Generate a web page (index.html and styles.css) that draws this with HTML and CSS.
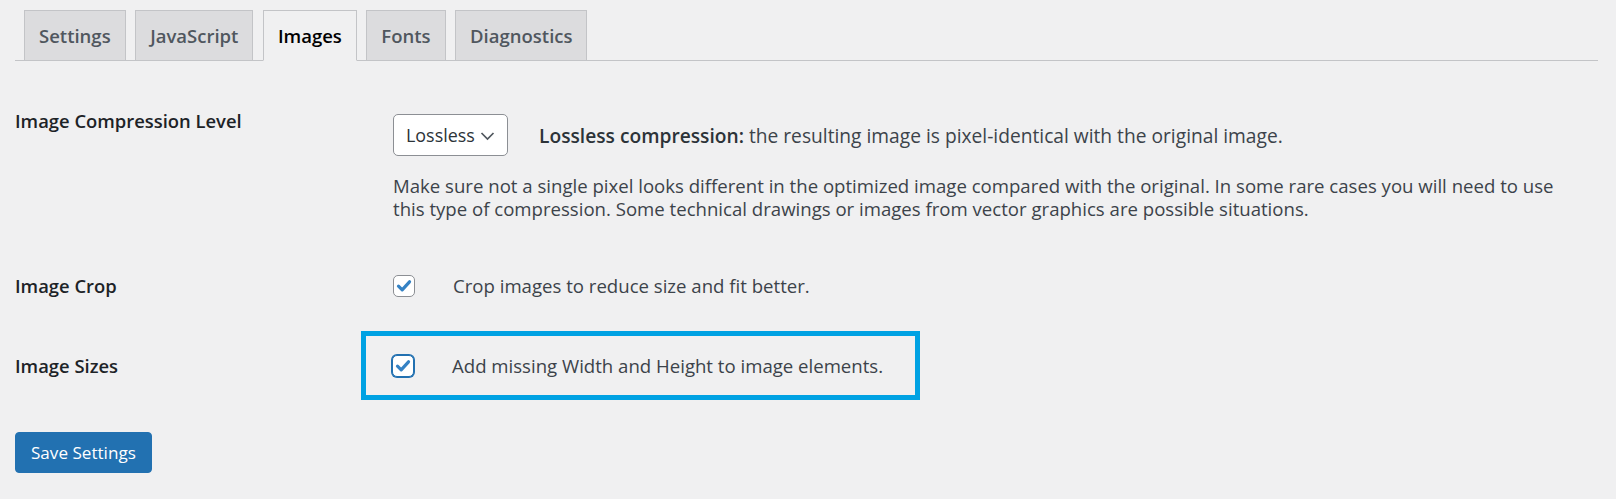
FILE: index.html
```html
<!DOCTYPE html>
<html lang="en">
<head>
<meta charset="utf-8">
<title>Images settings</title>
<link rel="stylesheet" href="styles.css">
</head>
<body>
<div class="wrap">
  <nav class="tabs">
    <a class="tab">Settings</a>
    <a class="tab">JavaScript</a>
    <a class="tab tab-active">Images</a>
    <a class="tab">Fonts</a>
    <a class="tab">Diagnostics</a>
  </nav>

  <div class="form">
    <div class="row row-compression">
      <div class="label">Image Compression Level</div>
      <div class="field">
        <div class="select-line">
          <span class="select">Lossless
            <svg class="chevron" width="15" height="10" viewBox="0 0 15 10"><path d="M1.5 2 L7.5 8 L13.5 2" fill="none" stroke="#50575e" stroke-width="1.7"/></svg>
          </span>
          <span class="hint"><b>Lossless compression:</b> the resulting image is pixel-identical with the original image.</span>
        </div>
        <p class="desc">Make sure not a single pixel looks different in the optimized image compared with the original. In some rare cases you will need to use<br>this type of compression. Some technical drawings or images from vector graphics are possible situations.</p>
      </div>
    </div>

    <div class="row row-check">
      <div class="label">Image Crop</div>
      <div class="field field-check">
        <span class="checkbox">
          <svg width="16" height="14" viewBox="0 0 16 14"><path d="M2.5 7.2 L6.2 10.8 L13.5 2.8" fill="none" stroke="#3582c4" stroke-width="3.2" stroke-linecap="round" stroke-linejoin="round"/></svg>
        </span>
        <span class="check-text">Crop images to reduce size and fit better.</span>
      </div>
    </div>

    <div class="row row-check row-highlight">
      <div class="label">Image Sizes</div>
      <div class="field field-check field-highlight">
        <span class="checkbox checkbox-focus">
          <svg width="16" height="14" viewBox="0 0 16 14"><path d="M2.5 7.2 L6.2 10.8 L13.5 2.8" fill="none" stroke="#3582c4" stroke-width="3.2" stroke-linecap="round" stroke-linejoin="round"/></svg>
        </span>
        <span class="check-text">Add missing Width and Height to image elements.</span>
      </div>
    </div>
  </div>

  <button class="save" type="button">Save Settings</button>
</div>
</body>
</html>
```

FILE: styles.css
```css
* { box-sizing: border-box; }

html, body {
  margin: 0;
  padding: 0;
  background: #f0f0f1;
}

body {
  font-family: "Open Sans", "Noto Sans", sans-serif;
  color: #3c434a;
  font-size: 18.6px;
}

.wrap {
  padding: 0 18px 0 15px;
}

/* Tabs */
.tabs {
  display: flex;
  padding: 10px 0 0 9px;
  border-bottom: 1px solid #c3c4c7;
  height: 61px;
}

.tab {
  display: block;
  height: 51px;
  margin-right: 9.5px;
  padding: 0 14px;
  border: 1px solid #c3c4c7;
  background: #dcdcde;
  color: #50575e;
  font-size: 18.5px;
  font-weight: 600;
  line-height: 50px;
  text-decoration: none;
}

.tab-active {
  background: #f0f0f1;
  border-bottom-color: #f0f0f1;
  color: #000;
}

/* Form rows */
.row {
  display: grid;
  grid-template-columns: 346px 1fr;
}

.label {
  color: #1d2327;
  font-size: 18.4px;
  font-weight: 600;
  line-height: 26px;
}

.row-compression {
  height: 189px;
}

.row-compression .label {
  padding-top: 47px;
}

.row-compression .field {
  padding: 53px 0 0 32px;
}

.select-line {
  display: flex;
  align-items: center;
}

.select {
  display: inline-flex;
  align-items: center;
  justify-content: space-between;
  width: 115px;
  height: 42px;
  padding: 0 12px 0 12px;
  background: #fff;
  border: 1px solid #8c8f94;
  border-radius: 5px;
  color: #2c3338;
  font-size: 17.9px;
}

.chevron {
  margin-top: 1px;
}

.hint {
  margin-left: 31px;
  font-size: 19.2px;
}

.hint b {
  font-weight: 600;
  color: #2c3338;
}

.desc {
  margin: 18px 0 0;
  line-height: 23px;
}

.row-check {
  align-items: center;
  height: 71px;
}

.field-check {
  display: flex;
  align-items: center;
  padding-left: 31px;
}

.checkbox {
  display: inline-flex;
  align-items: center;
  justify-content: center;
  flex: none;
  width: 22px;
  height: 22px;
  margin-left: 1px;
  background: #fff;
  border: 1px solid #8c8f94;
  border-radius: 5px;
}

.checkbox-focus {
  border-color: #2271b1;
  box-shadow: 0 0 0 1px #2271b1;
}

.check-text {
  margin-left: 38px;
}

.row-highlight {
  margin-top: 10px;
  height: 69px;
}

.field-highlight {
  width: 559px;
  height: 69px;
  padding-left: 26px;
  border: 5px solid #00a2e3;
}

.field-highlight .checkbox {
  margin-left: 0;
}

/* Button */
.save {
  display: block;
  margin-top: 32px;
  height: 41px;
  padding: 0 15px;
  background: #2271b1;
  border: 1px solid #2271b1;
  border-radius: 4px;
  color: #fff;
  font-family: inherit;
  font-size: 17.1px;
  line-height: 39px;
  cursor: pointer;
}
```
